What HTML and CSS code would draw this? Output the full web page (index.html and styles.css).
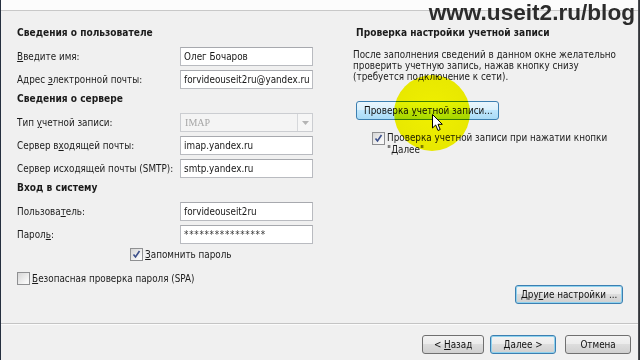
FILE: index.html
```html
<!DOCTYPE html>
<html lang="ru">
<head>
<meta charset="UTF-8">
<meta name="viewport" content="width=device-width, initial-scale=1.0">
<title>Параметры учетной записи</title>
<link rel="stylesheet" href="styles.css">
</head>
<body>
<div class="screen">
  <div class="edge-left"></div>
  <div class="dialog">
    <div class="top-band"></div>
    <div class="content">
      <div class="col-left">
        <h3 class="group-title">Сведения о пользователе</h3>
        <div class="fields">
          <label><u>В</u>ведите имя:</label>
          <input type="text" value="Олег Бочаров" readonly>
          <label>Адрес <u>э</u>лектронной почты:</label>
          <input type="text" value="forvideouseit2ru@yandex.ru" readonly>
        </div>
        <h3 class="group-title">Сведения о сервере</h3>
        <div class="fields">
          <label>Тип <u>у</u>четной записи:</label>
          <div class="select">
            <span class="select-value">IMAP</span>
            <span class="select-arrow">
              <svg width="7" height="4" viewBox="0 0 7 4"><path d="M0 0 L7 0 L3.5 4 Z" fill="#b4b4b4"/></svg>
            </span>
          </div>
          <label>Сервер в<u>х</u>одящей почты:</label>
          <input type="text" value="imap.yandex.ru" readonly>
          <label>Сервер исходящей почты (SMTP):</label>
          <input type="text" value="smtp.yandex.ru" readonly>
        </div>
        <h3 class="group-title">Вход в систему</h3>
        <div class="fields">
          <label>Пользова<u>т</u>ель:</label>
          <input type="text" value="forvideouseit2ru" readonly>
          <label>Парол<u>ь</u>:</label>
          <input type="text" class="pw" value="****************" readonly>
        </div>
        <div class="check remember">
          <span class="box">
            <svg width="9" height="9" viewBox="0 0 9 9"><path d="M1.5 4.5 L3.5 7 L7.5 1" fill="none" stroke="#3b4f8a" stroke-width="1.6"/></svg>
          </span>
          <span><u>З</u>апомнить пароль</span>
        </div>
        <div class="check spa">
          <span class="box"></span>
          <span><u>Б</u>езопасная проверка пароля (SPA)</span>
        </div>
      </div>

      <div class="col-right">
        <h3 class="group-title">Проверка настройки учетной записи</h3>
        <p class="note">После заполнения сведений в данном окне желательно проверить учетную запись, нажав кнопку снизу (требуется подключение к сети).</p>
        <button class="btn hover test-btn">Проверка <u>у</u>четной записи...</button>
        <div class="check test-check">
          <span class="box">
            <svg width="9" height="9" viewBox="0 0 9 9"><path d="M1.5 4.5 L3.5 7 L7.5 1" fill="none" stroke="#3b4f8a" stroke-width="1.6"/></svg>
          </span>
          <span class="test-text">Проверка учетной записи при нажатии кнопки "Далее"</span>
        </div>
        <button class="btn focus more-btn">Дру<u>г</u>ие настройки ...</button>
      </div>
    </div>
    <div class="footer">
      <button class="btn back">&lt; <u>Н</u>азад</button>
      <button class="btn focus next"><u>Д</u>алее &gt;</button>
      <button class="btn cancel">Отмена</button>
    </div>
  </div>
  <div class="edge-right"></div>

  <div class="watermark">www.useit2.ru/blog</div>
  <div class="spot"></div>
  <svg class="cursor" width="12" height="18" viewBox="0 0 12 18">
    <path d="M0.5 0.5 L0.5 14 L3.7 11 L6 16.5 L8.2 15.5 L6 10.3 L10.3 10.3 Z" fill="#fff" stroke="#000" stroke-width="1" stroke-linejoin="round"/>
  </svg>
</div>
</body>
</html>
```
FILE: styles.css
```css
body {
  margin: 0;
  font-family: "DejaVu Sans Condensed", "DejaVu Sans", sans-serif;
  font-size: 9.8px;
  color: #1b1b1b;
}
.screen {
  position: relative;
  width: 640px;
  height: 360px;
  display: flex;
  overflow: hidden;
}
.edge-left {
  width: 4px;
  background: linear-gradient(to right, #151c28, #2c3748 70%, #5f6876);
}
.edge-right {
  width: 7px;
  background: linear-gradient(to right, #80838a, #3f4146 30%, #2b2d31);
}
.dialog {
  flex: 1;
  display: flex;
  flex-direction: column;
  background: #f0f0f0;
}
.top-band {
  height: 10px;
  background: #fcfcfc;
  border-bottom: 1px solid #c8c8c8;
}
.content {
  flex: 1;
  display: flex;
  padding: 14px 0 0 16px;
}
.col-left {
  width: 296px;
}
.col-right {
  flex: 1;
  display: flex;
  flex-direction: column;
  align-items: flex-start;
  margin-left: 40px;
  padding: 0 15px 19px 0;
}
.group-title {
  margin: 2px 0 6px;
  font-size: 10.1px;
  line-height: 16px;
  font-weight: bold;
}
.col-left .group-title:first-child {
  margin-top: 0;
}
.col-right .group-title {
  margin: 0;
  padding-left: 3px;
}
.fields {
  display: grid;
  grid-template-columns: 163px 133px;
  row-gap: 4px;
  align-items: center;
}
.fields label {
  line-height: 19px;
}
input[type="text"] {
  width: 133px;
  height: 19px;
  box-sizing: border-box;
  margin: 0;
  padding: 0 3px;
  border: 1px solid #b9bbc0;
  border-top-color: #a7a9ae;
  background: #fff;
  font: inherit;
  color: #161616;
  outline: none;
}
input.pw {
  letter-spacing: 0.7px;
  color: #333;
}
.select {
  display: flex;
  align-items: center;
  width: 133px;
  height: 19px;
  box-sizing: border-box;
  border: 1px solid #cbcdd1;
  background: #f4f4f4;
}
.select-value {
  padding-left: 4px;
  font-family: "Liberation Serif", serif;
  font-size: 10px;
  color: #a6a6a6;
}
.select-arrow {
  margin-left: auto;
  width: 15px;
  height: 17px;
  box-sizing: border-box;
  border-left: 1px solid #d6d8db;
  background: #f6f6f6;
  display: flex;
  align-items: center;
  justify-content: center;
}
.check {
  display: flex;
  align-items: center;
  height: 16px;
}
.box {
  width: 13px;
  height: 13px;
  box-sizing: border-box;
  flex: none;
  margin-right: 2px;
  border: 1px solid #8f9092;
  background: linear-gradient(135deg, #d6d6d6, #f8f8f8 80%);
  display: flex;
  align-items: center;
  justify-content: center;
}
.remember {
  margin: 2px 0 0 113px;
}
.spa {
  margin-top: 8px;
}
.note {
  width: 268px;
  margin: 8px 0 0;
  line-height: 11px;
}
.btn {
  height: 19px;
  box-sizing: border-box;
  margin: 0;
  padding: 0 4px;
  border: 1px solid #707070;
  border-radius: 3px;
  background: linear-gradient(#f3f3f3, #ebebeb 50%, #dddddd 50%, #d0d0d0);
  font: inherit;
  color: #111;
  white-space: nowrap;
  cursor: pointer;
}
.btn.hover {
  border-color: #3c7fb1;
  background: linear-gradient(#eaf6fd, #d9f0fc 50%, #bee6fd 50%, #a9dbf6);
}
.btn.focus {
  border-color: #3c7fb1;
  box-shadow: inset 0 0 0 1px #8fd2ee;
}
.test-btn {
  width: 143px;
  margin: 19px 0 0 3px;
  padding-left: 7px;
  text-align: left;
}
.test-check {
  align-items: flex-start;
  height: auto;
  margin: 12px 0 0 19px;
  line-height: 12px;
}
.test-text {
  width: 236px;
}
.more-btn {
  width: 108px;
  margin-top: auto;
  align-self: flex-end;
}
.footer {
  height: 37px;
  box-sizing: border-box;
  display: flex;
  justify-content: flex-end;
  gap: 6px;
  padding: 11px 7px 0 0;
  border-top: 1px solid #c4c4c4;
  box-shadow: inset 0 1px #fbfbfb;
}
.back {
  width: 62px;
}
.next {
  width: 66px;
}
.cancel {
  width: 66px;
  margin-left: 3px;
}
.watermark {
  position: absolute;
  top: 2px;
  right: 5px;
  font: bold 22.6px/1 "Liberation Sans", Arial, sans-serif;
  color: #2c2c2c;
}
.spot {
  position: absolute;
  left: 394px;
  top: 75px;
  width: 76px;
  height: 76px;
  border-radius: 50%;
  background: radial-gradient(circle, #ffff00 0%, #f6f600 80%, rgba(246, 246, 0, 0) 100%);
  mix-blend-mode: multiply;
}
.cursor {
  position: absolute;
  left: 432px;
  top: 114px;
}
```
